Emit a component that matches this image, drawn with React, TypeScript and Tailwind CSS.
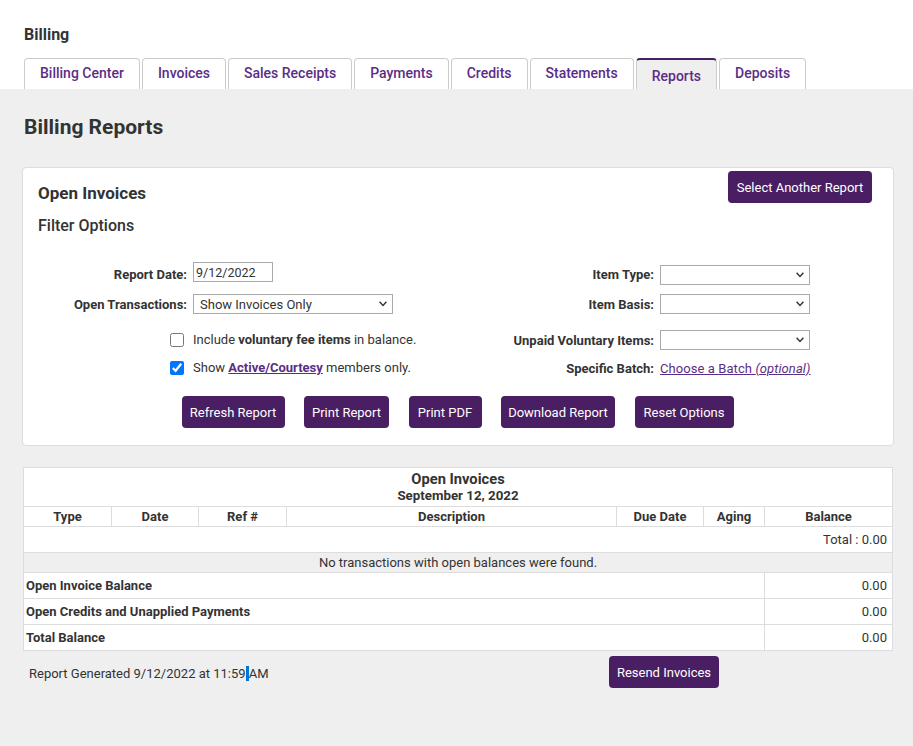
import React from "react";

const tabs = ["Billing Center", "Invoices", "Sales Receipts", "Payments", "Credits", "Statements", "Reports", "Deposits"];
const actions = [
  { label: "Refresh Report", width: "w-[103px]" },
  { label: "Print Report", width: "w-[85px]" },
  { label: "Print PDF", width: "w-[73px]" },
  { label: "Download Report", width: "w-[114px]" },
  { label: "Reset Options", width: "w-[99px]" },
];
const columns = ["Type", "Date", "Ref #", "Description", "Due Date", "Aging", "Balance"];
const totals = ["Open Invoice Balance", "Open Credits and Unapplied Payments", "Total Balance"];

const PurpleButton = ({ label, width }: { label: string; width: string }) => (
  <button className={`h-8 ${width} rounded-[4px] bg-[#4a1e62] text-white text-[13px] leading-none whitespace-nowrap`}>
    {label}
  </button>
);

const Field = ({ label, width, className, labelClass, children }: { label: string; width: string; className?: string; labelClass?: string; children: React.ReactNode }) => (
  <div className={`flex items-center gap-1.5 ${className ?? ""}`}>
    <label className={`${width} text-right font-bold whitespace-nowrap ${labelClass ?? "leading-[18px]"}`}>{label}</label>
    {children}
  </div>
);

const Select = ({ width, value }: { width: string; value?: string }) => (
  <div className={`relative h-5 ${width}`}>
    <select className="h-5 w-full appearance-none border border-[#aaaaaa] bg-white pl-1.5 text-[13px] text-[#333]">
      {value && <option>{value}</option>}
    </select>
    <svg className="absolute right-[6px] top-[7px] pointer-events-none" width="8" height="6" viewBox="0 0 8 6" fill="none">
      <path d="M0.6 0.8 L4 4.4 L7.4 0.8" stroke="#333333" strokeWidth="1.4" />
    </svg>
  </div>
);

export default function App() {
  return (
    <div className="min-h-[746px] bg-[#efefef] text-[13px] text-[#333333]" style={{ fontFamily: "Roboto, sans-serif" }}>
      {/* Header and tabs */}
      <div className="bg-white h-[89px] px-6 pt-[25px]">
        <h1 className="text-[16px] leading-[19px] font-bold">Billing</h1>
        <nav className="flex gap-0.5 mt-[14px]">
          {tabs.map((tab) => (
            <a
              key={tab}
              className={
                tab === "Reports"
                  ? "h-[31px] px-[15px] pt-[7px] rounded-t-[4px] border border-b-0 border-[#cccccc] border-t-2 border-t-[#4a1e62] bg-[#efefef] text-[14px] leading-[18px] font-medium text-[#5c2d87]"
                  : "h-[31px] px-[15px] pt-[5px] rounded-t-[4px] border border-b-0 border-[#cccccc] bg-white text-[14px] leading-[18px] font-medium text-[#5c2d87]"
              }
            >
              {tab}
            </a>
          ))}
        </nav>
      </div>

      <div className="px-[22px]">
        <h2 className="pl-0.5 pt-[25px] text-[21px] leading-[26px] font-bold">Billing Reports</h2>

        {/* Filter card */}
        <section className="flex flex-col mt-[27px] h-[279px] w-[872px] rounded-[4px] border border-[#dddddd] bg-white pl-[15px] pr-[21px] pb-[17px]">
          <div className="flex justify-between pt-[3px]">
            <div>
              <h3 className="pt-[13px] text-[17px] leading-[19px] font-bold">Open Invoices</h3>
              <h4 className="mt-[13px] text-[16px] leading-[19px] font-medium">Filter Options</h4>
            </div>
            <PurpleButton label="Select Another Report" width="w-[144px]" />
          </div>

          <div className="flex mt-[27px]">
            <div className="w-[444px]">
              <Field label="Report Date:" width="w-[149px]" labelClass="self-end leading-[14px]">
                <input
                  defaultValue="9/12/2022"
                  className="h-5 w-20 border border-[#aaaaaa] px-0.5 text-[12.5px]"
                />
              </Field>
              <Field label="Open Transactions:" width="w-[149px]" className="mt-3" labelClass="leading-[18px] pt-0.5">
                <Select width="w-[200px]" value="Show Invoices Only" />
              </Field>
              <label className="flex items-center gap-[9px] ml-[132px] mt-[19px] h-3.5">
                <input type="checkbox" className="w-3.5 h-3.5 m-0" />
                <span>
                  Include <b>voluntary fee items</b> in balance.
                </span>
              </label>
              <label className="flex items-center gap-[9px] ml-[132px] mt-3.5 h-3.5">
                <input type="checkbox" defaultChecked className="w-3.5 h-3.5 m-0" />
                <span>
                  Show <a className="font-bold text-[#5c2d87] underline">Active/Courtesy</a> members only.
                </span>
              </label>
            </div>
            <div className="pt-[3px]">
              <Field label="Item Type:" width="w-[172px]">
                <Select width="w-[150px]" />
              </Field>
              <Field label="Item Basis:" width="w-[172px]" className="mt-[9px]" labelClass="leading-[18px] pt-0.5">
                <Select width="w-[150px]" />
              </Field>
              <Field label="Unpaid Voluntary Items:" width="w-[172px]" className="mt-4" labelClass="leading-[18px] pt-0.5">
                <Select width="w-[150px]" />
              </Field>
              <Field label="Specific Batch:" width="w-[172px]" className="mt-[9px]">
                <a className="text-[#5c2d87] underline whitespace-nowrap tracking-[0.08px]">
                  Choose a Batch <i>(optional)</i>
                </a>
              </Field>
            </div>
          </div>

          <div className="flex justify-center gap-[19.5px] mt-auto pl-[5px]">
            {actions.map((action) => (
              <PurpleButton key={action.label} label={action.label} width={action.width} />
            ))}
          </div>
        </section>

        {/* Report table */}
        <table className="mt-[21px] ml-px w-[870px] table-fixed border-collapse bg-white border border-[#dddddd] leading-[18px]">
          <colgroup>
            <col className="w-[88px]" />
            <col className="w-[87px]" />
            <col className="w-[88px]" />
            <col className="w-[330px]" />
            <col className="w-[87px]" />
            <col className="w-[61px]" />
            <col />
          </colgroup>
          <thead>
            <tr className="h-[39px]">
              <th colSpan={7} className="border border-[#dddddd] font-bold">
                <div className="text-[14.7px] leading-[17px]">Open Invoices</div>
                <div className="text-[13.3px] leading-[16px]">September 12, 2022</div>
              </th>
            </tr>
            <tr className="h-5">
              {columns.map((col) => (
                <th key={col} className="border border-[#dddddd] font-bold">
                  {col}
                </th>
              ))}
            </tr>
          </thead>
          <tbody>
            <tr className="h-[26px]">
              <td colSpan={7} className="border border-[#dddddd] text-right pr-[5px]">
                Total : 0.00
              </td>
            </tr>
            <tr className="h-5 bg-[#efefef]">
              <td colSpan={7} className="border border-[#dddddd] text-center">
                No transactions with open balances were found.
              </td>
            </tr>
            {totals.map((row) => (
              <tr key={row} className="h-[26px]">
                <td colSpan={6} className="border border-[#dddddd] pl-0.5 font-bold">
                  {row}
                </td>
                <td className="border border-[#dddddd] text-right pr-[5px]">0.00</td>
              </tr>
            ))}
          </tbody>
        </table>

        <div className="flex items-center justify-between w-[871px] mt-[5px] pl-[7px] pr-[174px]">
          <span className="pt-1">
            Report Generated 9/12/2022 at 11:59<span className="bg-[#0074d9] text-white"> </span>AM
          </span>
          <PurpleButton label="Resend Invoices" width="w-[110px]" />
        </div>
      </div>
    </div>
  );
}
